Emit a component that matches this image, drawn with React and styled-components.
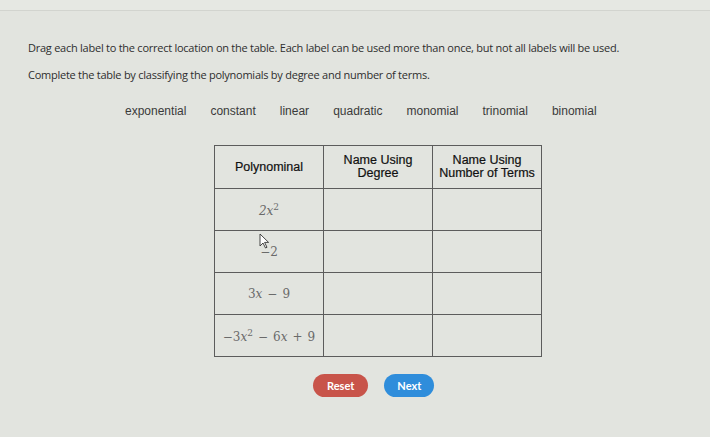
import React from 'react';
import styled, { createGlobalStyle } from 'styled-components';

const GlobalStyle = createGlobalStyle`
	html, body {
		margin: 0;
		padding: 0;
		background: #e2e4df;
	}
`

const Page = styled.div`
	width: 710px;
	height: 437px;
	box-sizing: border-box;
	font-family: 'Open Sans', sans-serif;
	color: #2e2e2e;
	overflow: hidden;
`

const TopBar = styled.div`
	height: 10px;
	background: #e6e8e3;
	border-bottom: 1px solid #d2d4cf;
`

const Content = styled.div`
	padding: 29px 0 0 28px;
`

const Instruction = styled.p`
	margin: 0 0 11px;
	font-size: 11px;
	letter-spacing: -0.25px;
	line-height: 16px;
`

const Labels = styled.div`
	display: flex;
	gap: 24px;
	margin: 21px 0 0 97px;
	font-family: 'Liberation Sans', Arial, sans-serif;
	font-size: 12px;
	color: #3a3a3a;
`

const Table = styled.table`
	position: relative;
	margin: 27px 0 0 186px;
	border-collapse: collapse;
	font-family: 'Liberation Sans', Arial, sans-serif;
	font-size: 12px;
	color: #222;
	td, th {
		border: 1px solid #5c5c5c;
		width: 109px;
		height: 42px;
		padding: 0 4px;
		text-align: center;
		box-sizing: border-box;
	}
	th {
		font-weight: normal;
		font-size: 12.5px;
		color: #111;
		line-height: 13px;
		height: 43px;
		-webkit-text-stroke: 0.2px #111;
	}
`

const Math = styled.span`
	font-family: 'DejaVu Serif', serif;
	font-size: 12px;
	color: #6a6a6a;
	i {
		font-style: italic;
	}
	sup {
		font-size: 9px;
	}
	b {
		font-weight: normal;
		margin: 0 5px;
	}
`

const Cursor = styled.svg`
	position: absolute;
	left: 44px;
	top: 87px;
`

const Buttons = styled.div`
	display: flex;
	gap: 16px;
	margin: 17px 0 0 285px;
`

const Button = styled.button`
	height: 23px;
	padding: 0 ${p => p.$pad}px;
	border: none;
	border-radius: 12px;
	background: ${p => p.$color};
	color: #fff;
	font-family: 'Lato', sans-serif;
	font-size: 11px;
	font-weight: bold;
`

const rows = [
	<><i>2x</i><sup>2</sup></>,
	<>−2</>,
	<>3<i>x</i><b>−</b>9</>,
	<>−3<i>x</i><sup>2</sup><b>−</b>6<i>x</i><b>+</b>9</>,
]

export default function App() {
	return (
		<Page>
			<GlobalStyle />
			<TopBar />
			<Content>
				<Instruction>Drag each label to the correct location on the table. Each label can be used more than once, but not all labels will be used.</Instruction>
				<Instruction>Complete the table by classifying the polynomials by degree and number of terms.</Instruction>
				<Labels>
					{['exponential', 'constant', 'linear', 'quadratic', 'monomial', 'trinomial', 'binomial'].map(l => (
						<span key={l}>{l}</span>
					))}
				</Labels>
				<Table>
					<thead>
						<tr>
							<th>Polynominal</th>
							<th>Name Using<br />Degree</th>
							<th>Name Using<br />Number of Terms</th>
						</tr>
					</thead>
					<tbody>
						{rows.map((r, i) => (
							<tr key={i}>
								<td><Math>{r}</Math></td>
								<td></td>
								<td></td>
							</tr>
						))}
					</tbody>
					<Cursor as="svg" width="11" height="16" viewBox="0 0 11 16">
						<path d="M1 1 L1 13 L4 10 L6.5 15 L8 14.3 L5.6 9.4 L9.6 9.4 Z" fill="#fff" stroke="#333" strokeWidth="0.9" />
					</Cursor>
				</Table>
				<Buttons>
					<Button $color="#c8544a" $pad={14}>Reset</Button>
					<Button $color="#2f8ddb" $pad={13}>Next</Button>
				</Buttons>
			</Content>
		</Page>
	);
}
